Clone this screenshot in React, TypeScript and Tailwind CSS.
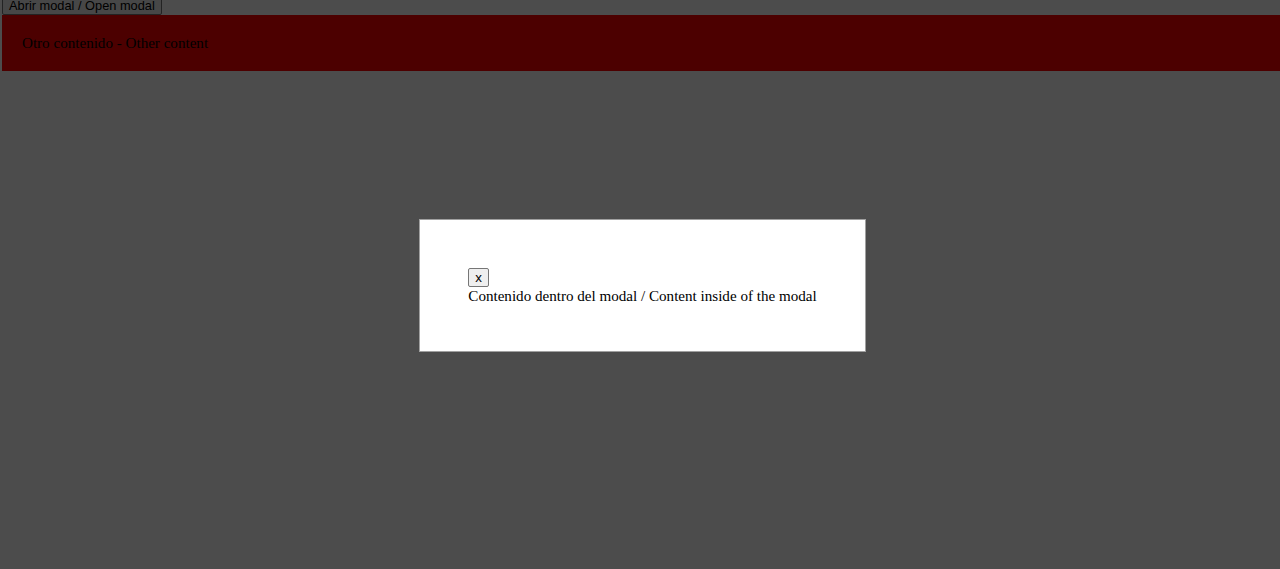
import { useState } from "react";

const btn =
  "rounded-[2px] border border-[#767676] bg-[#efefef] px-[6px] py-[1px] text-[12.8px] leading-[15px] text-black font-['Liberation_Sans',Arial,sans-serif]";

export default function App() {
  const [open, setOpen] = useState(true);

  return (
    <div className="min-h-[569px] bg-white pl-[2px] font-['Liberation_Serif','Times_New_Roman',serif] text-[15.1px] text-black">
      <button type="button" onClick={() => setOpen(true)} className={`${btn} -mt-[4px] block`}>
        Abrir modal / Open modal
      </button>
      <div className="bg-[#ff0000] px-5 py-[19px] leading-[18px]">
        Otro contenido - Other content
      </div>

      {open ? (
        <div className="fixed inset-0 flex items-center justify-center bg-black/70 pt-[2px] pl-[5px]">
          <div className="border border-[#a0a0a0] bg-white px-12 pt-12 pb-[46px] leading-[18px]">
            <button type="button" onClick={() => setOpen(false)} className={`${btn} block text-[13.33px]`}>
              x
            </button>
            <div>Contenido dentro del modal / Content inside of the modal</div>
          </div>
        </div>
      ) : null}
    </div>
  );
}
